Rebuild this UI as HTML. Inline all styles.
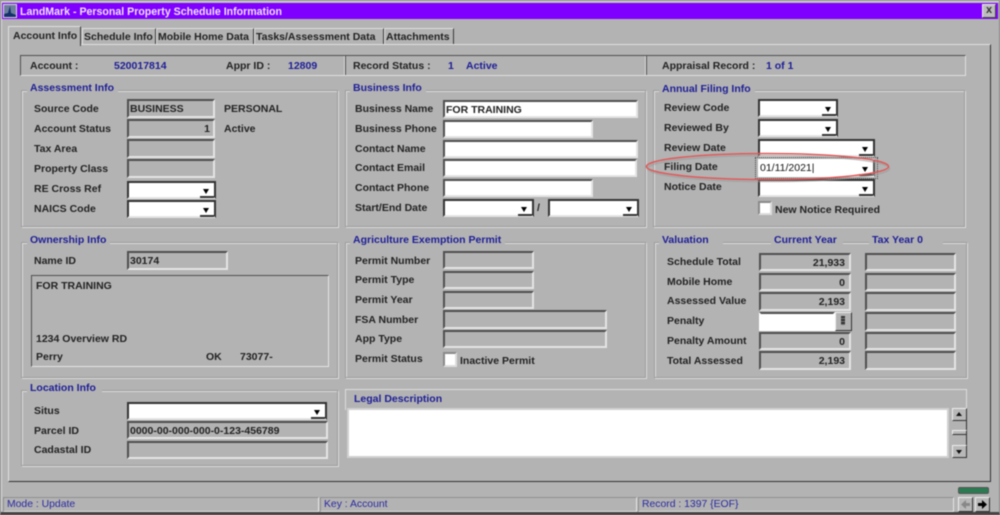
<!DOCTYPE html>
<html><head><meta charset="utf-8"><style>
html,body{margin:0;padding:0;background:#b3b3b3}
#r{position:relative;width:1000px;height:515px;overflow:hidden;background:#b3b3b3;font:bold 10.5px "Liberation Sans",sans-serif;color:#222;filter:blur(.4px)}
#r div{position:absolute;box-sizing:border-box}
.t{white-space:nowrap;line-height:14px;height:14px;margin-top:2px}
.g{border:1px solid #9c9c9c;box-shadow:1px 1px 0 #dcdcdc,inset 1px 1px 0 #dcdcdc}
.h{background:#b3b3b3;padding:0 4px 0 3px;color:#1e1e96;white-space:nowrap;line-height:14px;height:14px;margin-top:2px}
.b{color:#1e1e96}
.f{border:2px solid;border-color:#505050 #e4e4e4 #e4e4e4 #505050;background:#b3b3b3;line-height:16px;padding:0 1px;white-space:nowrap}
.w{background:#fff}
.a{border:2px solid;border-color:#333 #333 #e4e4e4 #333;background:#fff}
.a i{position:absolute;right:0;top:0;bottom:-1px;width:14px;background:#fff;border-bottom:2px solid #333;display:block}
.a i:after{content:"";position:absolute;left:3px;top:6px;border:3.500px solid transparent;border-top:5px solid #000;border-bottom:0}
.c{border:2px solid;border-color:#8a8a8a #dcdcdc #dcdcdc #8a8a8a;background:#fff}
.rt{text-align:right}
.s{border:1px solid;border-color:#8f8f8f #e4e4e4 #e4e4e4 #8f8f8f;background:#b3b3b3;font:10.400px/14px "Liberation Sans",sans-serif;color:#2a2aa0;padding-left:3px}
.tb{border:1px solid #e0e0e0;border-bottom:0;border-right:1.500px solid #3a3a3a}
.sb{background:#b8b8b8;border:1px solid;border-color:#eee #333 #333 #eee}
</style></head><body><div id="r">
<div style="left:0;top:0;width:1000px;height:515px;border:1px solid #888;border-bottom:3px solid #444;box-shadow:inset 1px 1px 0 #dcdcdc"></div>
<div style="left:2px;top:3px;width:996px;height:16px;background:#8000ff"></div>
<div style="left:3px;top:4px;width:14px;height:14px;background:#6d7f9c;border:1px solid #ddd"></div>
<svg width="12" height="12" viewBox="0 0 12 12" style="position:absolute;left:4px;top:5px"><path d="M0 12V9L4 8 6 1 7 8 12 10V12Z" fill="#12306a"/></svg>
<div class="t" style="left:20px;top:3px;color:#eee2ff;font-size:10.600px">LandMark - Personal Property Schedule Information</div>
<div style="left:982px;top:4px;width:14px;height:14px;background:#bdbdbd;border:1px solid;border-color:#eee #444 #444 #eee;font:bold 11px/11px 'Liberation Sans',sans-serif;text-align:center;color:#333">x</div>

<div style="left:8px;top:44px;width:983px;height:438px;border:1px solid;border-color:#e0e0e0 #333 #333 #e0e0e0;border-width:1px 1.500px 1.500px 1px"></div>
<div class="tb" style="left:8px;top:26px;width:73px;height:20px;background:#b3b3b3"></div>
<div class="tb" style="left:82px;top:28px;width:74px;height:16px"></div>
<div class="tb" style="left:156px;top:28px;width:98px;height:16px"></div>
<div class="tb" style="left:254px;top:28px;width:130px;height:16px"></div>
<div class="tb" style="left:384px;top:28px;width:70px;height:16px"></div>
<div class="t" style="left:13px;top:27px">Account Info</div>
<div class="t" style="left:84px;top:28px">Schedule Info</div>
<div class="t" style="left:158px;top:28px">Mobile Home Data</div>
<div class="t" style="left:256px;top:28px">Tasks/Assessment Data</div>
<div class="t" style="left:386px;top:28px">Attachments</div>

<div style="left:20px;top:55px;width:946px;height:21px;border:1.500px solid;border-color:#505050 #e0e0e0 #e0e0e0 #505050"></div>
<div style="left:344px;top:56px;width:2px;height:19px;border-right:1.500px solid #505050;border-left:1px solid #e0e0e0"></div>
<div style="left:645px;top:56px;width:2px;height:19px;border-right:1.500px solid #505050;border-left:1px solid #e0e0e0"></div>
<div class="t" style="left:30px;top:57px">Account :</div>
<div class="t b" style="left:114px;top:57px">520017814</div>
<div class="t" style="left:226px;top:57px">Appr ID :</div>
<div class="t b" style="left:288px;top:57px">12809</div>
<div class="t" style="left:353px;top:57px">Record Status :</div>
<div class="t b" style="left:448px;top:57px">1</div>
<div class="t b" style="left:466px;top:57px">Active</div>
<div class="t" style="left:662px;top:57px">Appraisal Record :</div>
<div class="t b" style="left:766px;top:57px">1 of 1</div>

<!-- group boxes -->
<div class="g" style="left:21px;top:90px;width:317px;height:137px"></div>
<div class="h" style="left:27px;top:79px">Assessment Info</div>
<div class="g" style="left:345px;top:90px;width:301px;height:137px"></div>
<div class="h" style="left:350px;top:79px">Business Info</div>
<div class="g" style="left:653px;top:90px;width:312px;height:137px"></div>
<div class="h" style="left:659px;top:80px">Annual Filing Info</div>
<div class="g" style="left:21px;top:242px;width:317px;height:136px"></div>
<div class="h" style="left:27px;top:231px">Ownership Info</div>
<div class="g" style="left:345px;top:242px;width:301px;height:136px"></div>
<div class="h" style="left:350px;top:231px">Agriculture Exemption Permit</div>
<div class="g" style="left:654px;top:242px;width:313px;height:136px"></div>
<div class="h" style="left:659px;top:231px;padding-right:14px">Valuation</div>
<div class="h" style="left:771px;top:231px;padding-right:6px">Current Year</div>
<div class="h" style="left:869px;top:231px;padding-right:20px">Tax Year 0</div>
<div class="g" style="left:21px;top:390px;width:317px;height:76px"></div>
<div class="h" style="left:27px;top:379px;padding-right:6px">Location Info</div>
<div style="left:345px;top:389px;width:622px;height:21px;border:1.500px solid #dcdcdc;border-bottom:0"></div>
<div class="t b" style="left:354px;top:390px">Legal Description</div>

<!-- assessment -->
<div class="t" style="left:34px;top:100px">Source Code</div>
<div class="t" style="left:34px;top:120px">Account Status</div>
<div class="t" style="left:34px;top:140px">Tax Area</div>
<div class="t" style="left:34px;top:160px">Property Class</div>
<div class="t" style="left:34px;top:180px">RE Cross Ref</div>
<div class="t" style="left:34px;top:200px">NAICS Code</div>
<div class="f" style="left:127px;top:99px;width:88px;height:19px">BUSINESS</div>
<div class="t" style="left:224px;top:100px">PERSONAL</div>
<div class="f rt" style="left:127px;top:119px;width:88px;height:19px;padding-right:3px">1</div>
<div class="t" style="left:224px;top:120px">Active</div>
<div class="f" style="left:127px;top:139px;width:88px;height:19px"></div>
<div class="f" style="left:127px;top:159px;width:88px;height:19px"></div>
<div class="a" style="left:127px;top:181px;width:89px;height:18px"><i></i></div>
<div class="a" style="left:127px;top:200px;width:89px;height:18px"><i></i></div>

<!-- business -->
<div class="t" style="left:355px;top:100px">Business Name</div>
<div class="t" style="left:355px;top:120px">Business Phone</div>
<div class="t" style="left:355px;top:140px">Contact Name</div>
<div class="t" style="left:355px;top:159px">Contact Email</div>
<div class="t" style="left:355px;top:179px">Contact Phone</div>
<div class="t" style="left:355px;top:199px">Start/End Date</div>
<div class="f w" style="left:443px;top:100px;width:195px;height:18px">FOR TRAINING</div>
<div class="f w" style="left:443px;top:120px;width:150px;height:18px"></div>
<div class="f w" style="left:443px;top:140px;width:195px;height:18px"></div>
<div class="f w" style="left:443px;top:159px;width:194px;height:18px"></div>
<div class="f w" style="left:443px;top:179px;width:150px;height:18px"></div>
<div class="a" style="left:443px;top:199px;width:91px;height:18px"><i></i></div>
<div class="t" style="left:537px;top:199px">/</div>
<div class="a" style="left:548px;top:199px;width:91px;height:18px"><i></i></div>

<!-- annual -->
<div class="t" style="left:664px;top:99px">Review Code</div>
<div class="t" style="left:664px;top:119px">Reviewed By</div>
<div class="t" style="left:664px;top:139px">Review Date</div>
<div class="t" style="left:664px;top:158px">Filing Date</div>
<div class="t" style="left:664px;top:178px">Notice Date</div>
<div class="a" style="left:758px;top:99px;width:80px;height:18px"><i></i></div>
<div class="a" style="left:758px;top:119px;width:80px;height:18px"><i></i></div>
<div class="a" style="left:758px;top:139px;width:117px;height:18px"><i></i></div>
<div class="a" style="left:758px;top:159px;width:117px;height:18px;font-weight:normal;color:#111;line-height:14px;border-color:#fff #555 #fff #fff">01/11/2021|<i></i></div>
<div style="left:755px;top:157px;width:123px;height:22px;border:1px dotted #444"></div>
<div class="a" style="left:758px;top:179px;width:117px;height:18px"><i></i></div>
<div class="c" style="left:758px;top:201px;width:14px;height:14px"></div>
<div class="t" style="left:775px;top:201px">New Notice Required</div>

<!-- ownership -->
<div class="t" style="left:34px;top:252px">Name ID</div>
<div class="f" style="left:127px;top:251px;width:101px;height:19px">30174</div>
<div class="f" style="left:31px;top:275px;width:298px;height:92px;border-width:1.500px 1px 1px 1.500px"></div>
<div class="t" style="left:36px;top:277px">FOR TRAINING</div>
<div class="t" style="left:36px;top:330px">1234 Overview RD</div>
<div class="t" style="left:36px;top:348px">Perry</div>
<div class="t" style="left:206px;top:348px">OK</div>
<div class="t" style="left:240px;top:348px">73077-</div>

<!-- agri -->
<div class="t" style="left:355px;top:252px">Permit Number</div>
<div class="t" style="left:355px;top:271px">Permit Type</div>
<div class="t" style="left:355px;top:291px">Permit Year</div>
<div class="t" style="left:355px;top:311px">FSA Number</div>
<div class="t" style="left:355px;top:330px">App Type</div>
<div class="t" style="left:355px;top:350px">Permit Status</div>
<div class="f" style="left:443px;top:251px;width:91px;height:18px"></div>
<div class="f" style="left:443px;top:271px;width:91px;height:18px"></div>
<div class="f" style="left:443px;top:291px;width:91px;height:18px"></div>
<div class="f" style="left:443px;top:310px;width:164px;height:19px"></div>
<div class="f" style="left:443px;top:330px;width:164px;height:18px"></div>
<div class="c" style="left:443px;top:352px;width:14px;height:15px"></div>
<div class="t" style="left:460px;top:352px">Inactive Permit</div>

<!-- valuation -->
<div class="t" style="left:667px;top:253px">Schedule Total</div>
<div class="t" style="left:667px;top:273px">Mobile Home</div>
<div class="t" style="left:667px;top:292px">Assessed Value</div>
<div class="t" style="left:667px;top:312px">Penalty</div>
<div class="t" style="left:667px;top:332px">Penalty Amount</div>
<div class="t" style="left:667px;top:352px">Total Assessed</div>
<div class="f rt" style="left:759px;top:253px;width:92px;height:18px;padding-right:4px">21,933</div>
<div class="f rt" style="left:759px;top:273px;width:92px;height:18px;padding-right:4px">0</div>
<div class="f rt" style="left:759px;top:292px;width:92px;height:19px;padding-right:4px">2,193</div>
<div class="f w" style="left:759px;top:312px;width:76px;height:19px;border-color:#505050 #fff #fff #fff"></div>
<div style="left:835px;top:312px;width:17px;height:19px;background:#b3b3b3;border:1px solid;border-color:#eee #333 #333 #eee"></div>
<div style="left:841px;top:316px;width:4px;height:9px;background:repeating-linear-gradient(#333 0 2px,#777 2px 3px)"></div>
<div class="f rt" style="left:759px;top:332px;width:92px;height:18px;padding-right:4px">0</div>
<div class="f rt" style="left:759px;top:351px;width:92px;height:19px;padding-right:4px">2,193</div>
<div class="f" style="left:865px;top:253px;width:91px;height:18px"></div>
<div class="f" style="left:865px;top:273px;width:91px;height:18px"></div>
<div class="f" style="left:865px;top:292px;width:91px;height:19px"></div>
<div class="f" style="left:865px;top:312px;width:91px;height:19px"></div>
<div class="f" style="left:865px;top:332px;width:91px;height:18px"></div>
<div class="f" style="left:865px;top:351px;width:91px;height:19px"></div>

<!-- location -->
<div class="t" style="left:34px;top:402px">Situs</div>
<div class="t" style="left:34px;top:422px">Parcel ID</div>
<div class="t" style="left:34px;top:441px">Cadastal ID</div>
<div class="a" style="left:127px;top:402px;width:200px;height:18px"><i></i></div>
<div class="f" style="left:127px;top:421px;width:201px;height:18px">0000-00-000-000-0-123-456789</div>
<div class="f" style="left:127px;top:441px;width:201px;height:18px"></div>

<!-- legal -->
<div style="left:347px;top:408px;width:602px;height:50px;background:#fff;border:2px solid #d0d0d0"></div>
<div style="left:952px;top:408px;width:15px;height:50px;background:#b3b3b3;border-right:1px solid #333;border-bottom:1px solid #333"></div>
<div class="sb" style="left:952px;top:408px;width:15px;height:13px"></div>
<div style="left:956px;top:412px;border:3.500px solid transparent;border-bottom:4px solid #111;border-top:0;width:0;height:0"></div>
<div class="sb" style="left:952px;top:430px;width:15px;height:5px"></div>
<div class="sb" style="left:952px;top:445px;width:15px;height:13px"></div>
<div style="left:956px;top:450px;border:3.500px solid transparent;border-top:4px solid #111;border-bottom:0;width:0;height:0"></div>

<!-- status -->
<div class="s" style="left:3px;top:497px;width:316px;height:15px">Mode : Update</div>
<div class="s" style="left:320px;top:497px;width:317px;height:15px">Key : Account</div>
<div class="s" style="left:638px;top:497px;width:316px;height:15px">Record : 1397 {EOF}</div>
<div style="left:958px;top:487px;width:31px;height:7px;background:#2a7a52;border-radius:2px;border:1px solid #555"></div>
<div class="sb" style="left:958px;top:497px;width:15px;height:15px"><svg width="13" height="13" viewBox="0 0 13 13" style="display:block"><path d="M11 5H7V2L2 6.500 7 11V8h4z" fill="#888"/></svg></div>
<div class="sb" style="left:975px;top:497px;width:15px;height:15px"><svg width="13" height="13" viewBox="0 0 13 13" style="display:block"><path d="M2 5h4V2l5 4.500-5 4.500V8H2z" fill="#000"/></svg></div>

<svg width="1000" height="515" style="position:absolute;left:0;top:0;pointer-events:none">
<ellipse cx="767.500" cy="167" rx="121" ry="13" fill="none" stroke="#999" stroke-width="1.500" transform="translate(1 1.500)" opacity=".6"/>
<ellipse cx="767.500" cy="166.500" rx="121" ry="13" fill="none" stroke="#e05a5a" stroke-width="1.500"/>
</svg>
</div></body></html>
